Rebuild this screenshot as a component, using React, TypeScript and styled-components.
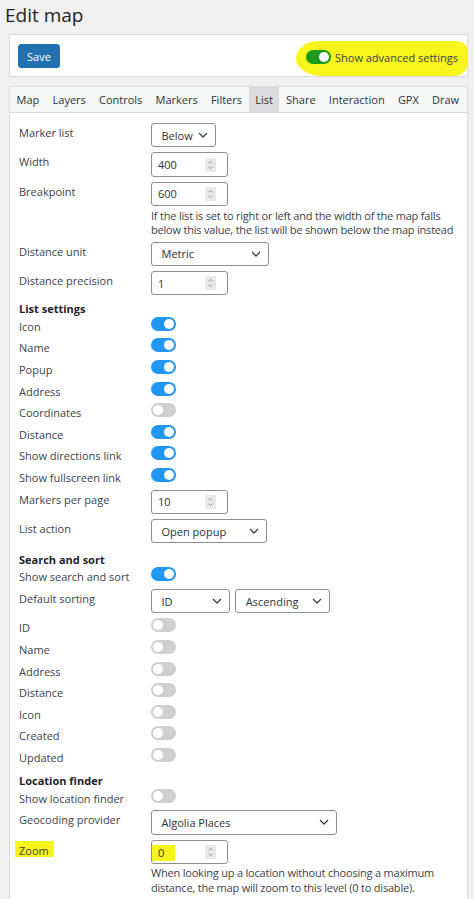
import React from 'react';
import styled, { createGlobalStyle } from 'styled-components';

const GlobalStyle = createGlobalStyle`
  body {
    margin: 0;
    background: #f0f0f1;
    font-family: 'Open Sans', 'Noto Sans', sans-serif;
    font-size: 11px;
    color: #3c434a;
  }
`;

const Page = styled.div`
  padding: 0 6px 0 9px;
`;

const Title = styled.h1`
  margin: 0 0 6px -4px;
  padding-top: 2px;
  font-size: 19px;
  font-weight: 400;
  line-height: 26px;
  color: #1d2327;
`;

const Panel = styled.div`
  background: #fff;
  border: 1px solid #dcdcde;
`;

const Toolbar = styled(Panel)`
  display: flex;
  align-items: center;
  justify-content: space-between;
  padding: 9px 9px 8px 8px;
  margin-bottom: 9px;
`;

const SaveButton = styled.button`
  height: 24px;
  padding: 0 8px;
  border: 1px solid #2271b1;
  border-radius: 3px;
  background: #2271b1;
  color: #fff;
  font-family: inherit;
  font-size: 11px;
`;

const Advanced = styled.label`
  position: relative;
  z-index: 0;
  display: flex;
  align-items: center;
  gap: 4px;
  margin-top: 2px;
  color: #3c434a;
`;

/* the yellow marker-pen stroke drawn over the screenshot */
const Highlight = styled.span`
  position: absolute;
  z-index: -1;
  top: -9px;
  bottom: -11px;
  left: -10px;
  right: -10px;
  background: #f7f51c;
  border-radius: 26px 14px 16px 30px / 20px 12px 16px 20px;
`;

const Switch = styled.span<{ $on?: boolean; $color?: string }>`
  position: relative;
  display: inline-block;
  flex: none;
  width: 25px;
  height: 14px;
  border-radius: 7px;
  background: ${(p) => (p.$on ? p.$color ?? '#2196f3' : '#cfcfcf')};

  &::after {
    content: '';
    position: absolute;
    top: 2px;
    left: ${(p) => (p.$on ? '13px' : '2px')};
    width: 10px;
    height: 10px;
    border-radius: 50%;
    background: #fff;
  }
`;

const TabBar = styled.div`
  display: flex;
  height: 25px;
  background: #f6f7f7;
  border-bottom: 1px solid #dcdcde;
`;

const Tab = styled.div<{ $active?: boolean }>`
  display: flex;
  align-items: center;
  padding: 0 6.6px;
  color: #2c3338;
  background: ${(p) => (p.$active ? '#dcdcde' : 'transparent')};
`;

const Form = styled.div`
  display: grid;
  grid-template-columns: 132px 1fr;
  padding: 7.5px 9px 12px;
`;

const Row = styled.div<{ $toggle?: boolean }>`
  display: grid;
  grid-column: 1 / -1;
  grid-template-columns: subgrid;
  align-items: start;
  box-sizing: border-box;
  padding: ${(p) => (p.$toggle ? '2.5px 0 0' : '2.5px 0')};
  height: ${(p) => (p.$toggle ? '21.6px' : 'auto')};
`;

const Label = styled.div`
  padding-top: 1px;
  line-height: 18px;
  color: #3c434a;
`;

const Control = styled.div`
  display: flex;
  gap: 5.3px;
`;

const SectionTitle = styled.div<{ $space: number }>`
  grid-column: 1 / -1;
  padding-top: ${(p) => p.$space}px;
  line-height: 11px;
  font-weight: 700;
  color: #1d2327;
`;

const Help = styled.div`
  grid-column: 2;
  margin-bottom: 1px;
  line-height: 14.7px;
  letter-spacing: -0.2px;
  white-space: nowrap;
  color: #3c434a;
`;

const SelectBox = styled.div<{ $w: number }>`
  display: flex;
  align-items: center;
  justify-content: space-between;
  box-sizing: border-box;
  width: ${(p) => p.$w}px;
  height: 24.4px;
  padding: 0 7px 0 9.5px;
  border: 1px solid #8c8f94;
  border-radius: 3px;
  background: #fff;
  color: #2c3338;
`;

const NumberBox = styled.div`
  display: flex;
  align-items: center;
  justify-content: space-between;
  box-sizing: border-box;
  width: 77px;
  height: 24.4px;
  padding: 0 10.6px 0 6px;
  border: 1px solid #8c8f94;
  border-radius: 3px;
  background: #fff;
  color: #2c3338;
`;

const Value = styled.span<{ $marked?: boolean }>`
  ${(p) =>
    p.$marked &&
    `
    display: inline-block;
    margin: 3px 0 0 -6px;
    padding: 0 11px 0 6px;
    line-height: 16px;
    background: #f7f51c;
  `}
`;

const Spinner = styled.span`
  display: flex;
  width: 11px;
  height: 14px;
  border-radius: 1px;
  background: #e9e9e9;
`;

const Mark = styled.span`
  display: inline-block;
  margin-left: -4px;
  padding: 4px 5px 0 4px;
  line-height: 12px;
  background: #f7f51c;
`;

const Chevron = () => (
  <svg width="10" height="6" viewBox="0 0 10 6" aria-hidden>
    <path d="M1 1l4 4 4-4" fill="none" stroke="#3c434a" strokeWidth="1.3" />
  </svg>
);

const Select = ({ w, children }: { w: number; children: React.ReactNode }) => (
  <SelectBox $w={w}>
    <span>{children}</span>
    <Chevron />
  </SelectBox>
);

const NumberInput = ({ value, marked }: { value: string; marked?: boolean }) => (
  <NumberBox>
    <Value $marked={marked}>{value}</Value>
    <Spinner>
      <svg width="11" height="14" viewBox="0 0 11 14" aria-hidden>
        <path d="M3.5 5.3l2-2 2 2M3.5 8.7l2 2 2-2" fill="none" stroke="#8a8a8a" strokeWidth="0.9" />
      </svg>
    </Spinner>
  </NumberBox>
);

const Field = ({ label, children }: { label: React.ReactNode; children: React.ReactNode }) => (
  <Row>
    <Label>{label}</Label>
    <Control>{children}</Control>
  </Row>
);

const ToggleField = ({ label, on }: { label: string; on?: boolean }) => (
  <Row $toggle>
    <Label>{label}</Label>
    <Control>
      <Switch $on={on} />
    </Control>
  </Row>
);

const tabs = ['Map', 'Layers', 'Controls', 'Markers', 'Filters', 'List', 'Share', 'Interaction', 'GPX', 'Draw'];

export default function App() {
  return (
    <Page>
      <GlobalStyle />
      <Title>Edit map</Title>
      <Toolbar>
        <SaveButton>Save</SaveButton>
        <Advanced>
          <Highlight />
          <Switch $on $color="#1c9a1c" />
          Show advanced settings
        </Advanced>
      </Toolbar>
      <Panel>
        <TabBar>
          {tabs.map((t) => (
            <Tab key={t} $active={t === 'List'}>
              {t}
            </Tab>
          ))}
        </TabBar>
        <Form>
          <Field label="Marker list">
            <Select w={65}>Below</Select>
          </Field>
          <Field label="Width">
            <NumberInput value="400" />
          </Field>
          <Field label="Breakpoint">
            <NumberInput value="600" />
          </Field>
          <Help>
            If the list is set to right or left and the width of the map falls
            <br />
            below this value, the list will be shown below the map instead
          </Help>
          <Field label="Distance unit">
            <Select w={118}>Metric</Select>
          </Field>
          <Field label="Distance precision">
            <NumberInput value="1" />
          </Field>

          <SectionTitle $space={5.5}>List settings</SectionTitle>
          <ToggleField label="Icon" on />
          <ToggleField label="Name" on />
          <ToggleField label="Popup" on />
          <ToggleField label="Address" on />
          <ToggleField label="Coordinates" />
          <ToggleField label="Distance" on />
          <ToggleField label="Show directions link" on />
          <ToggleField label="Show fullscreen link" on />
          <Field label="Markers per page">
            <NumberInput value="10" />
          </Field>
          <Field label="List action">
            <Select w={116}>Open popup</Select>
          </Field>

          <SectionTitle $space={8}>Search and sort</SectionTitle>
          <ToggleField label="Show search and sort" on />
          <Field label="Default sorting">
            <Select w={79}>ID</Select>
            <Select w={95}>Ascending</Select>
          </Field>
          <ToggleField label="ID" />
          <ToggleField label="Name" />
          <ToggleField label="Address" />
          <ToggleField label="Distance" />
          <ToggleField label="Icon" />
          <ToggleField label="Created" />
          <ToggleField label="Updated" />

          <SectionTitle $space={8}>Location finder</SectionTitle>
          <ToggleField label="Show location finder" />
          <Field label="Geocoding provider">
            <Select w={186}>Algolia Places</Select>
          </Field>
          <Field label={<Mark>Zoom</Mark>}>
            <NumberInput value="0" marked />
          </Field>
          <Help>
            When looking up a location without choosing a maximum
            <br />
            distance, the map will zoom to this level (0 to disable).
          </Help>
        </Form>
      </Panel>
    </Page>
  );
}
